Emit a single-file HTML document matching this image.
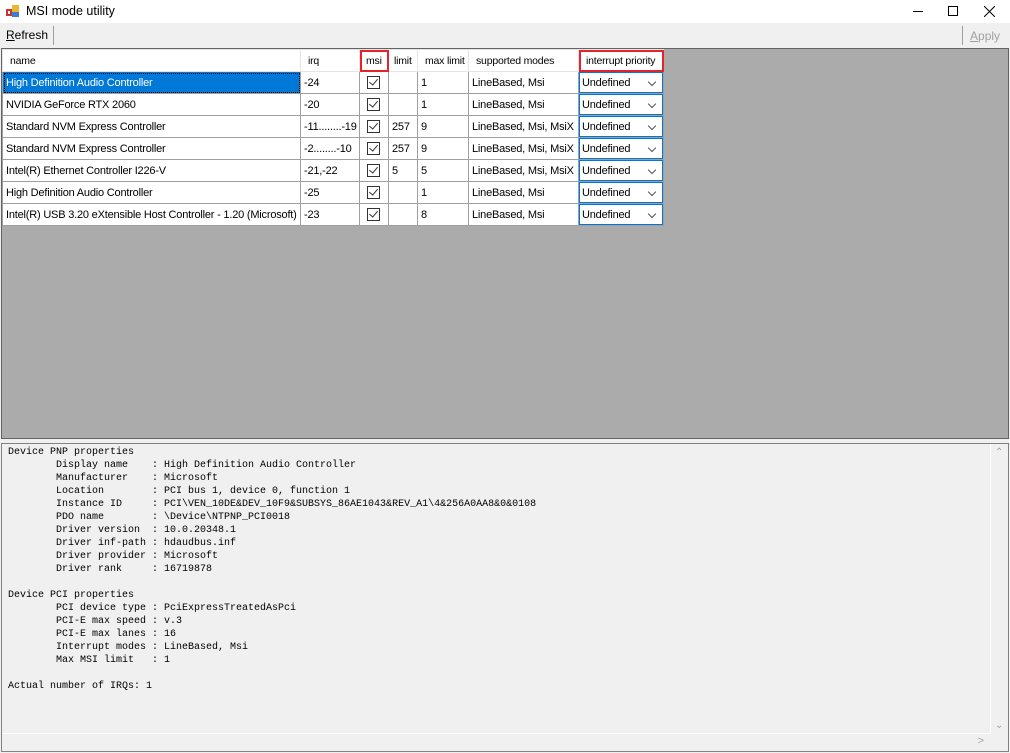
<!DOCTYPE html>
<html><head><meta charset="utf-8"><style>
*{margin:0;padding:0;box-sizing:border-box}
body{width:1010px;height:753px;background:#f0f0f0;font-family:"Liberation Sans",sans-serif;font-size:12px;color:#000;position:relative;overflow:hidden}
#title{position:absolute;left:0;top:0;width:1010px;height:23px;background:#fff}
#title span{position:absolute;left:26px;top:4px;font-size:12.5px}
#tb{position:absolute;left:0;top:23px;width:1010px;height:25px;background:#f0f0f0}
#grid{position:absolute;left:1px;top:48px;width:1008px;height:391px;background:#ababab;border:1px solid #646464}
table{position:absolute;left:0;top:0;width:661px;border-collapse:collapse;table-layout:fixed}
td{height:22px;border:1px solid #a0a0a0;background:#fff;padding:0 0 0 3px;white-space:nowrap;overflow:hidden;font-size:11px;letter-spacing:-0.2px}
tr.h td{background:#fff;border-color:#e5e5e5;padding-left:7px;font-size:10.5px}
.cb{display:inline-block;width:13px;height:13px;border:1px solid #333;position:relative;vertical-align:middle;margin-left:4px}
.cb:after{content:"";position:absolute;left:3px;top:0px;width:4px;height:7px;border:solid #333;border-width:0 1.3px 1.3px 0;transform:rotate(40deg)}
td.dd{padding:0}
.dd div{height:21px;border:1px solid #0078d7;padding:4px 0 0 2px;position:relative;line-height:13px}
.dd div:after{content:"";position:absolute;right:7px;top:6px;width:5px;height:5px;border:solid #555;border-width:0 1px 1px 0;transform:rotate(45deg)}
.sel{background:#0078d7!important;color:#fff;outline:1px dotted #000;outline-offset:-2px}
.red{outline:2px solid #e3242b;outline-offset:-2px}
#txt{position:absolute;left:1px;top:443px;width:1008px;height:309px;border:1px solid #828282;background:#f0f0f0}
pre{position:absolute;left:6px;top:2px;font-family:"Liberation Mono",monospace;font-size:10px;line-height:13px}
#vs{position:absolute;right:1px;top:0;width:17px;height:289px;background:#f0f0f0;border-left:1px solid #fff}
#hs{position:absolute;left:0;bottom:1px;width:988px;height:17px;border-top:1px solid #fff}
</style></head><body>
<div id="title">
<svg style="position:absolute;left:6px;top:5px" width="14" height="13"><rect x="0" y="4" width="6" height="7" fill="#c33"/><rect x="6" y="0" width="7" height="7" fill="#e8b830"/><rect x="6" y="7" width="7" height="5" fill="#3a7bd5"/><rect x="2" y="6" width="2" height="3" fill="#fff"/></svg>
<span>MSI mode utility</span>
<div style="position:absolute;left:913px;top:11px;width:10px;height:1px;background:#000"></div>
<div style="position:absolute;left:948px;top:6px;width:10px;height:10px;border:1px solid #000"></div>
<svg style="position:absolute;left:984px;top:6px" width="11" height="11"><path d="M0 0L11 11M11 0L0 11" stroke="#000" stroke-width="1"/></svg>
</div>
<div id="tb">
<span style="position:absolute;left:6px;top:5px"><u>R</u>efresh</span>
<div style="position:absolute;left:53px;top:3px;width:1px;height:19px;background:#a0a0a0"></div>
<div style="position:absolute;left:962px;top:3px;width:1px;height:19px;background:#a0a0a0"></div>
<span style="position:absolute;left:970px;top:6px;color:#a0a0a0"><u>A</u>pply</span>
</div>
<div id="grid">
<table>
<colgroup><col style="width:298px"><col style="width:59px"><col style="width:29px"><col style="width:29px"><col style="width:51px"><col style="width:110px"><col style="width:85px"></colgroup>
<tr class="h"><td>name</td><td>irq</td><td class="red" style="padding-left:6px">msi</td><td style="padding-left:5px">limit</td><td>max limit</td><td>supported modes</td><td class="red">interrupt priority</td></tr>
<tr><td class="sel">High Definition Audio Controller</td><td>-24</td><td><span class="cb"></span></td><td></td><td>1</td><td>LineBased, Msi</td><td class="dd"><div>Undefined</div></td></tr>
<tr><td>NVIDIA GeForce RTX 2060</td><td>-20</td><td><span class="cb"></span></td><td></td><td>1</td><td>LineBased, Msi</td><td class="dd"><div>Undefined</div></td></tr>
<tr><td>Standard NVM Express Controller</td><td>-11........-19</td><td><span class="cb"></span></td><td>257</td><td>9</td><td>LineBased, Msi, MsiX</td><td class="dd"><div>Undefined</div></td></tr>
<tr><td>Standard NVM Express Controller</td><td>-2........-10</td><td><span class="cb"></span></td><td>257</td><td>9</td><td>LineBased, Msi, MsiX</td><td class="dd"><div>Undefined</div></td></tr>
<tr><td>Intel(R) Ethernet Controller I226-V</td><td>-21,-22</td><td><span class="cb"></span></td><td>5</td><td>5</td><td>LineBased, Msi, MsiX</td><td class="dd"><div>Undefined</div></td></tr>
<tr><td>High Definition Audio Controller</td><td>-25</td><td><span class="cb"></span></td><td></td><td>1</td><td>LineBased, Msi</td><td class="dd"><div>Undefined</div></td></tr>
<tr><td>Intel(R) USB 3.20 eXtensible Host Controller - 1.20 (Microsoft)</td><td>-23</td><td><span class="cb"></span></td><td></td><td>8</td><td>LineBased, Msi</td><td class="dd"><div>Undefined</div></td></tr>
</table>
</div>
<div id="txt">
<pre>Device PNP properties
        Display name    : High Definition Audio Controller
        Manufacturer    : Microsoft
        Location        : PCI bus 1, device 0, function 1
        Instance ID     : PCI\VEN_10DE&amp;DEV_10F9&amp;SUBSYS_86AE1043&amp;REV_A1\4&amp;256A0AA8&amp;0&amp;0108
        PDO name        : \Device\NTPNP_PCI0018
        Driver version  : 10.0.20348.1
        Driver inf-path : hdaudbus.inf
        Driver provider : Microsoft
        Driver rank     : 16719878

Device PCI properties
        PCI device type : PciExpressTreatedAsPci
        PCI-E max speed : v.3
        PCI-E max lanes : 16
        Interrupt modes : LineBased, Msi
        Max MSI limit   : 1

Actual number of IRQs: 1</pre>
<div id="vs"><span style="position:absolute;left:4px;top:3px;color:#a0a0a0;font-size:10px">&#8963;</span><span style="position:absolute;left:4px;bottom:2px;color:#a0a0a0;font-size:10px">&#8964;</span></div>
<div id="hs"><span style="position:absolute;right:6px;top:1px;color:#a0a0a0;font-size:11px">&gt;</span></div>
</div>
</body></html>
